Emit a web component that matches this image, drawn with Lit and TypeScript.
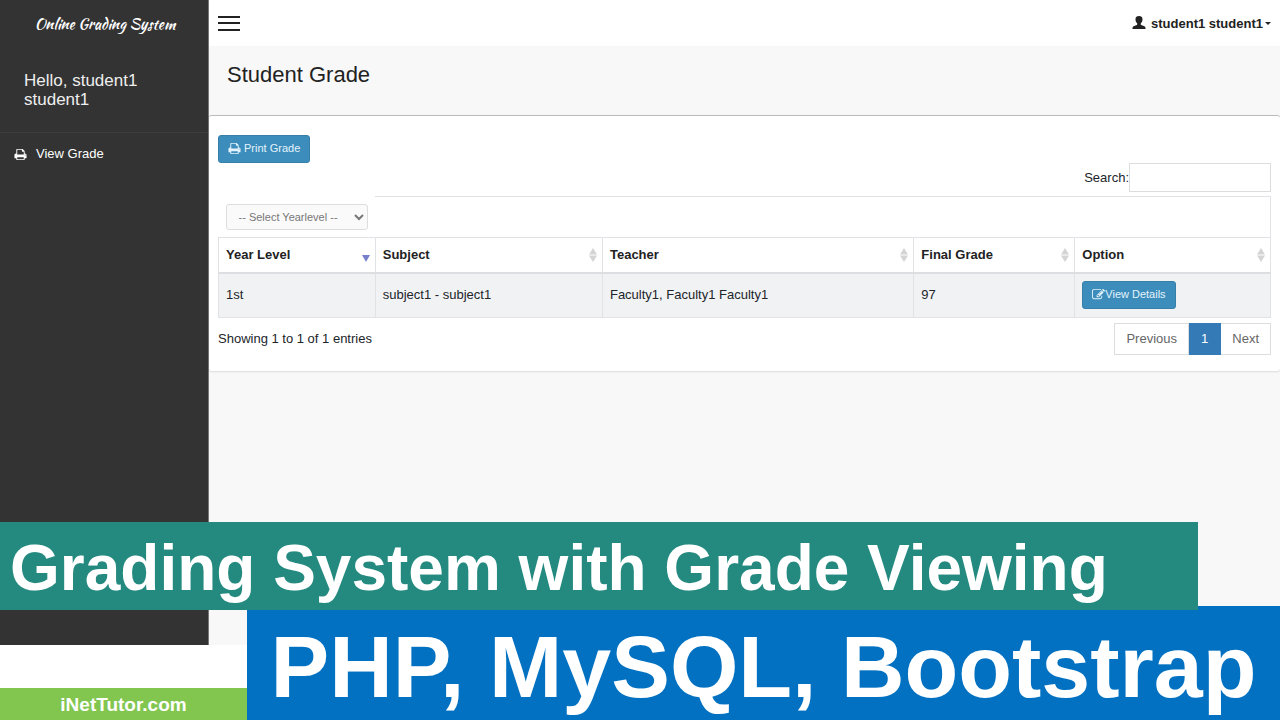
import { LitElement, html, css, svg } from "lit";
import { customElement, state } from "lit/decorators.js";

const printIcon = html`<svg class="icon" viewBox="0 0 1664 1792" aria-hidden="true">
  ${svg`<path d="M384 1536h896v-256h-896v256zM384 896h896v-384h-160q-40 0-68-28t-28-68v-160h-640v640zM1536 960q0-26-19-45t-45-19-45 19-19 45 19 45 45 19 45-19 19-45zM1664 960v416q0 13-9.5 22.5t-22.5 9.5h-224v160q0 40-28 68t-68 28h-960q-40 0-68-28t-28-68v-160h-224q-13 0-22.5-9.5t-9.5-22.5v-416q0-79 56.5-135.5t135.5-56.5h64v-544q0-40 28-68t68-28h672q40 0 88 20t76 48l152 152q28 28 48 76t20 88v256h64q79 0 135.5 56.5t56.5 135.5z"/>`}
</svg>`;

const editIcon = html`<svg class="icon" viewBox="0 0 1792 1792" aria-hidden="true">
  ${svg`<path d="M888 1184l116-116-152-152-116 116v56h96v96h56zM1328 464q-16-16-33 1l-350 350q-17 17-1 33t33-1l350-350q17-17 1-33zM1408 1058v190q0 119-84.5 203.5t-203.5 84.5h-832q-119 0-203.5-84.5t-84.5-203.5v-832q0-119 84.5-203.5t203.5-84.5h832q63 0 117 25 15 7 18 23 3 17-9 29l-49 49q-14 14-32 8-23-6-45-6h-832q-66 0-113 47t-47 113v832q0 66 47 113t113 47h832q66 0 113-47t47-113v-126q0-13 9-22l64-64q15-15 35-7t20 29zM1312 320l288 288-672 672h-288v-288zM1756 452l-92 92-288-288 92-92q28-28 68-28t68 28l152 152q28 28 28 68t-28 68z"/>`}
</svg>`;

const userIcon = html`<svg class="user-icon" viewBox="0 0 14 14" aria-hidden="true">
  ${svg`<path d="M7 0C4.700 0 3.200 1.300 3.200 3.400C3.200 5.300 4 6.900 4.900 7.800C5.400 8.600 5.200 9.500 4.600 9.800L1.200 11C.4 11.400 0 12 0 12.800V14H14V12.800C14 12 13.600 11.400 12.800 11L9.400 9.800C8.800 9.500 8.600 8.600 9.100 7.800C10 6.900 10.800 5.300 10.800 3.400C10.800 1.300 9.300 0 7 0Z"/>`}
</svg>`;

const sortIcon = html`<svg class="sort" viewBox="0 0 8 14" aria-hidden="true">
  ${svg`<path d="M4 0L8 6.500H0ZM0 7.500H8L4 14Z"/>`}
</svg>`;

const sortedIcon = html`<svg class="sort sorted" viewBox="0 0 8 14" aria-hidden="true">
  ${svg`<path d="M0 7H8L4 14Z"/>`}
</svg>`;

interface Grade {
  level: string;
  subject: string;
  teacher: string;
  grade: number;
}

@customElement("app-root")
export class AppRoot extends LitElement {
  @state() private grades: Grade[] = [
    { level: "1st", subject: "subject1 - subject1", teacher: "Faculty1, Faculty1 Faculty1", grade: 97 },
  ];

  private columns = ["Year Level", "Subject", "Teacher", "Final Grade", "Option"];

  static styles = css`
    :host {
      display: flex;
      flex-direction: column;
      position: relative;
      box-sizing: border-box;
      min-height: 100vh;
      padding-bottom: 75px;
      background: #fff;
      color: #212529;
      font: 13px/18px "Liberation Sans", Arial, sans-serif;
    }
    *, *::before, *::after { box-sizing: border-box; }
    h1, h2, p { margin: 0; font-weight: normal; }
    button, input, select { font-family: inherit; margin: 0; }
    a { color: inherit; text-decoration: none; }

    .shell { flex: 1; display: grid; grid-template-columns: 209px minmax(0, 1fr); }

    .sidebar { background: #333; color: #fff; border-right: 1px solid #777; }
    .brand {
      display: flex;
      align-items: center;
      justify-content: center;
      height: 46px;
      padding: 2px 0 0 2px;
      font: 15px/20px "Kaushan Script", "Liberation Serif", cursive;
    }
    .hello { padding: 25px 24px 23px; font-size: 17px; line-height: 19px; color: #eee; }
    .nav { border-top: 1px solid #3d3d3d; }
    .nav a { display: flex; align-items: center; gap: 9px; padding: 12px 14px; }
    .icon { width: 13px; height: 13px; fill: currentColor; flex: none; }

    .content { background: #f8f8f8; }
    .topbar {
      display: flex;
      align-items: center;
      justify-content: space-between;
      height: 46px;
      padding: 0 9px;
      background: #fff;
    }
    .burger {
      display: flex;
      flex-direction: column;
      justify-content: space-between;
      width: 22px;
      height: 15px;
      padding: 0;
      border: 0;
      background: none;
    }
    .burger span { height: 2px; background: #222; }
    .account {
      display: flex;
      align-items: center;
      padding: 0;
      border: 0;
      background: none;
      color: #222;
      font-size: 13px;
      font-weight: bold;
    }
    .user-icon { width: 14px; height: 14px; margin-right: 5px; padding-bottom: 1px; fill: #222; }
    .caret { margin-left: 2px; border: 3px solid transparent; border-top-color: #222; border-bottom: 0; }
    .heading { height: 69px; padding: 15px 18px; font-size: 22px; line-height: 27px; color: #222; }

    .card {
      padding: 19px 9px 16px;
      background: #fff;
      border-top: 1px solid #bbb;
      border-radius: 3px;
      box-shadow: 0 1px 2px rgba(0, 0, 0, 0.12);
    }
    .button {
      display: inline-flex;
      align-items: center;
      height: 28px;
      padding: 0 9px 2px;
      border: 1px solid #367fa9;
      border-radius: 3px;
      background: #3c8dbc;
      color: #e4f3fb;
      font-size: 11px;
      line-height: 16px;
      vertical-align: top;
    }
    .print { gap: 3px; }
    .search { display: flex; justify-content: flex-end; align-items: center; margin-bottom: 4px; }
    .search input { width: 142px; height: 29px; border: 1px solid #ddd; background: #fff; }

    table { width: 100%; border-collapse: collapse; table-layout: fixed; }
    .level { width: 14.9%; }
    .subject { width: 21.6%; }
    .teacher { width: 29.6%; }
    .grade { width: 15.3%; }
    th, td { padding: 0 7px; text-align: left; border: 1px solid #e0e2e5; }
    .filters td { height: 41px; }
    .filters .filter { border-top: 0; border-left: 0; border-right: 0; }
    .filters .rest { border-left: 0; }
    select {
      display: block;
      width: 142px;
      height: 26px;
      padding: 0 8px;
      border: 1px solid #ddd;
      border-radius: 3px;
      background: #fafafa;
      color: #777;
      font-size: 11px;
    }
    th { height: 35px; border-bottom: 2px solid #dcdee1; color: #222; }
    .th { display: flex; align-items: center; justify-content: space-between; margin-right: -2px; }
    .sort { width: 8px; height: 14px; fill: #d4d4d4; }
    .sorted { fill: #7880cc; }
    tbody td { height: 45px; background: #f1f2f4; }

    .footer { display: flex; justify-content: space-between; align-items: center; margin-top: 5px; }
    .pages { display: flex; }
    .pages button {
      height: 32px;
      padding: 0 11px 2px;
      border: 1px solid #ddd;
      background: #fff;
      color: #666;
      font-size: 13px;
    }
    .pages button + button { border-left: 0; }
    .pages .current { padding: 0 12px 2px; background: #337ab7; border-color: #337ab7; color: #fff; }

    .captions {
      position: absolute;
      left: 0;
      right: 0;
      bottom: 0;
      color: #fff;
      font-weight: bold;
      white-space: nowrap;
    }
    .title {
      position: relative;
      z-index: 1;
      width: 93.6%;
      height: 88px;
      padding: 0 10px;
      background: #248a80;
      font-size: 64px;
      line-height: 92px;
      font-weight: bold;
    }
    .strip { display: flex; align-items: flex-end; margin-top: -4px; }
    .site {
      width: 247px;
      height: 32px;
      background: #82c650;
      font-size: 19px;
      line-height: 33px;
      text-align: center;
    }
    .stack {
      flex: 1;
      height: 114px;
      background: #0271c1;
      font-size: 88px;
      line-height: 122px;
      text-align: center;
    }
  `;

  render() {
    return html`
      <div class="shell">
        <aside class="sidebar">
          <div class="brand">Online Grading System</div>
          <p class="hello">Hello, student1 student1</p>
          <nav class="nav"><a href="#grades">${printIcon}View Grade</a></nav>
        </aside>
        <main class="content">
          <header class="topbar">
            <button class="burger" aria-label="Toggle menu"><span></span><span></span><span></span></button>
            <button class="account">${userIcon}student1 student1<span class="caret"></span></button>
          </header>
          <h1 class="heading">Student Grade</h1>
          <section class="card" id="grades">
            <button class="button print">${printIcon}Print Grade</button>
            <div class="search">
              <label for="search">Search:</label><input id="search" type="search" />
            </div>
            <table>
              <colgroup>
                <col class="level" /><col class="subject" /><col class="teacher" /><col class="grade" /><col />
              </colgroup>
              <thead>
                <tr class="filters">
                  <td class="filter">
                    <select aria-label="Year level">
                      <option>-- Select Yearlevel --</option>
                    </select>
                  </td>
                  <td class="rest" colspan="4"></td>
                </tr>
                <tr>
                  ${this.columns.map(
                    (name, i) => html`<th scope="col"><div class="th">${name}${i === 0 ? sortedIcon : sortIcon}</div></th>`
                  )}
                </tr>
              </thead>
              <tbody>
                ${this.grades.map(
                  (g) => html`<tr>
                    <td>${g.level}</td>
                    <td>${g.subject}</td>
                    <td>${g.teacher}</td>
                    <td>${g.grade}</td>
                    <td><button class="button">${editIcon}View Details</button></td>
                  </tr>`
                )}
              </tbody>
            </table>
            <div class="footer">
              <p>Showing 1 to 1 of 1 entries</p>
              <nav class="pages" aria-label="Pages">
                <button>Previous</button><button class="current">1</button><button>Next</button>
              </nav>
            </div>
          </section>
        </main>
      </div>
      <div class="captions">
        <h2 class="title">Grading System with Grade Viewing</h2>
        <div class="strip">
          <div class="site">iNetTutor.com</div>
          <div class="stack">PHP, MySQL, Bootstrap</div>
        </div>
      </div>
    `;
  }
}
